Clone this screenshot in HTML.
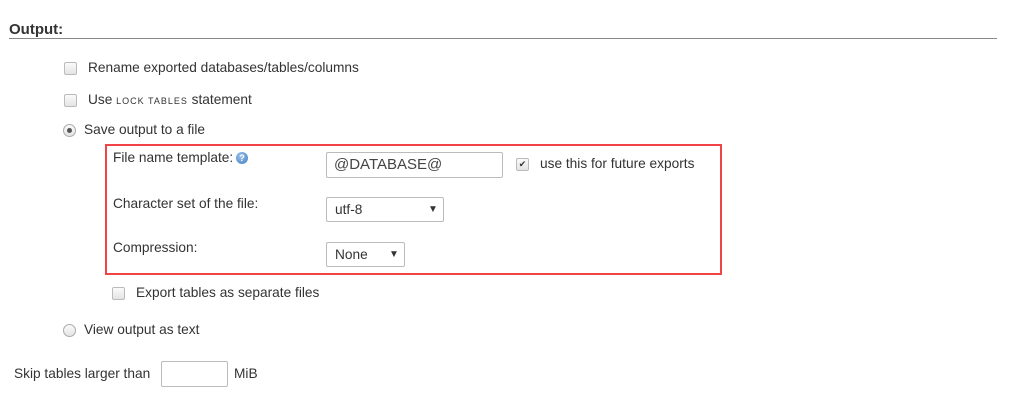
<!DOCTYPE html><html><head><style>
body{margin:0;width:1024px;height:412px;background:#fff;font-family:"Liberation Sans",sans-serif;font-size:13.7px;color:#333;position:relative;overflow:hidden}
.a{position:absolute;line-height:16px;white-space:nowrap}
.cb{position:absolute;width:11px;height:11px;border:1px solid #bbb;border-radius:2px;background:linear-gradient(#fafafa,#e4e4e4)}
.rd{position:absolute;width:11px;height:11px;border:1px solid #aaa;border-radius:50%;background:linear-gradient(#fafafa,#e4e4e4)}
.box{position:absolute;border:1px solid #bbb;border-radius:2px;background:#fff}
.sc{font-size:9px;letter-spacing:1px}
</style></head><body>
<div class="a" style="left:9px;top:22px;font-weight:bold;font-size:15px">Output:</div>
<div style="position:absolute;left:9px;top:38px;width:988px;height:1px;background:#888"></div>

<div class="cb" style="left:64px;top:62px"></div>
<div class="a" style="left:88px;top:60px">Rename exported databases/tables/columns</div>
<div class="cb" style="left:64px;top:94px"></div>
<div class="a" style="left:88px;top:92px">Use <span class="sc">LOCK TABLES</span> statement</div>
<div class="rd" style="left:63px;top:124px"><div style="position:absolute;left:3px;top:3px;width:5px;height:5px;border-radius:50%;background:#555"></div></div>
<div class="a" style="left:84px;top:122px">Save output to a file</div>

<div style="position:absolute;left:105px;top:144px;width:613px;height:127px;border:2px solid #f04448"></div>
<div class="a" style="left:113px;top:150px">File name template:</div>
<div style="position:absolute;left:236px;top:152px;width:12px;height:12px;border-radius:50%;background:radial-gradient(circle at 40% 35%,#9cc3ea,#3f7cc0);color:#fff;font-size:9px;font-weight:bold;text-align:center;line-height:12px">?</div>
<div class="box" style="left:326px;top:152px;width:175px;height:24px"><span class="a" style="left:7px;top:4px;font-size:15px;color:#444">@DATABASE@</span></div>
<div class="cb" style="left:516px;top:158px;font-size:9px;line-height:11px;text-align:center;color:#333">✔</div>
<div class="a" style="left:540px;top:156px">use this for future exports</div>

<div class="a" style="left:113px;top:196px">Character set of the file:</div>
<div class="box" style="left:326px;top:197px;width:116px;height:23px"><span class="a" style="left:8px;top:4px">utf-8</span><span class="a" style="left:101px;top:4px;font-size:10px">▼</span></div>
<div class="a" style="left:113px;top:240px">Compression:</div>
<div class="box" style="left:326px;top:242px;width:77px;height:23px"><span class="a" style="left:8px;top:4px">None</span><span class="a" style="left:62px;top:4px;font-size:10px">▼</span></div>

<div class="cb" style="left:112px;top:287px"></div>
<div class="a" style="left:136px;top:285px">Export tables as separate files</div>
<div class="rd" style="left:63px;top:324px"></div>
<div class="a" style="left:84px;top:322px">View output as text</div>

<div class="a" style="left:14px;top:366px">Skip tables larger than</div>
<div class="box" style="left:161px;top:361px;width:65px;height:24px"></div>
<div class="a" style="left:234px;top:366px">MiB</div>
</body></html>
